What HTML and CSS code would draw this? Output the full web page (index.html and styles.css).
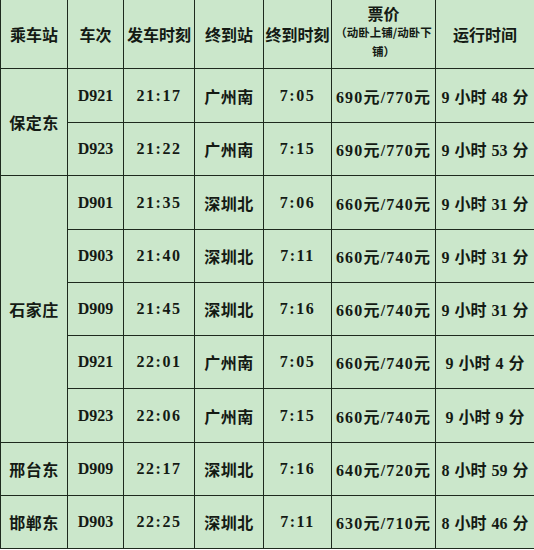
FILE: index.html
```html
<!DOCTYPE html>
<html lang="zh-CN">
<head>
<meta charset="utf-8">
<title>车次时刻表</title>
<link rel="stylesheet" href="styles.css">
</head>
<body>
<table class="schedule">
  <colgroup>
    <col class="c1"><col class="c2"><col class="c3"><col class="c4"><col class="c5"><col class="c6"><col class="c7">
  </colgroup>
  <thead>
    <tr class="head">
      <th class="first">乘车站</th>
      <th>车次</th>
      <th>发车时刻</th>
      <th>终到站</th>
      <th>终到时刻</th>
      <th class="price-h"><span class="ph-main">票价</span><span class="ph-sub">（动卧上铺/动卧下<br>铺）</span></th>
      <th class="last">运行时间</th>
    </tr>
  </thead>
  <tbody>
    <tr class="r54">
      <td class="first station" rowspan="2">保定东</td>
      <td>D921</td><td class="time">21:17</td><td class="cn">广州南</td><td class="time">7:05</td><td class="price">690元/770元</td><td class="last dur">9 小时 48 分</td>
    </tr>
    <tr class="r53">
      <td>D923</td><td class="time">21:22</td><td class="cn">广州南</td><td class="time">7:15</td><td class="price">690元/770元</td><td class="last dur">9 小时 53 分</td>
    </tr>
    <tr class="r54">
      <td class="first station" rowspan="5">石家庄</td>
      <td>D901</td><td class="time">21:35</td><td class="cn">深圳北</td><td class="time">7:06</td><td class="price">660元/740元</td><td class="last dur">9 小时 31 分</td>
    </tr>
    <tr class="r53">
      <td>D903</td><td class="time">21:40</td><td class="cn">深圳北</td><td class="time">7:11</td><td class="price">660元/740元</td><td class="last dur">9 小时 31 分</td>
    </tr>
    <tr class="r53">
      <td>D909</td><td class="time">21:45</td><td class="cn">深圳北</td><td class="time">7:16</td><td class="price">660元/740元</td><td class="last dur">9 小时 31 分</td>
    </tr>
    <tr class="r53">
      <td>D921</td><td class="time">22:01</td><td class="cn">广州南</td><td class="time">7:05</td><td class="price">660元/740元</td><td class="last dur">9 小时 4 分</td>
    </tr>
    <tr class="r54">
      <td>D923</td><td class="time">22:06</td><td class="cn">广州南</td><td class="time">7:15</td><td class="price">660元/740元</td><td class="last dur">9 小时 9 分</td>
    </tr>
    <tr class="r53">
      <td class="first station">邢台东</td>
      <td>D909</td><td class="time">22:17</td><td class="cn">深圳北</td><td class="time">7:16</td><td class="price">640元/720元</td><td class="last dur">8 小时 59 分</td>
    </tr>
    <tr class="r53">
      <td class="first station">邯郸东</td>
      <td>D903</td><td class="time">22:25</td><td class="cn">深圳北</td><td class="time">7:11</td><td class="price">630元/710元</td><td class="last dur">8 小时 46 分</td>
    </tr>
  </tbody>
</table>
</body>
</html>
```

FILE: styles.css
```css
html, body {
  margin: 0;
  padding: 0;
  background: #ffffff;
}

.schedule {
  width: 534px;
  table-layout: fixed;
  border-collapse: separate;
  border-spacing: 0;
  background: #cbe7cb;
  color: #141a14;
  font-family: "Liberation Serif", "Noto Sans CJK SC", serif;
  font-size: 16px;
  font-weight: bold;
}

.c1 { width: 68px; }
.c2 { width: 56px; }
.c3 { width: 71px; }
.c4 { width: 69px; }
.c5 { width: 68px; }
.c6 { width: 104px; }
.c7 { width: 98px; }

.schedule th,
.schedule td {
  box-sizing: border-box;
  padding: 0;
  text-align: center;
  vertical-align: middle;
  white-space: nowrap;
  border-right: 1px solid #1e2a1e;
  border-bottom: 1px solid #1e2a1e;
}

.schedule th.last,
.schedule td.last {
  border-right: none;
}

.schedule .first {
  border-left: 1px solid #1e2a1e;
}

.head {
  height: 69px;
}

.schedule th {
  font-family: "Noto Sans CJK SC", sans-serif;
  font-size: 16px;
  font-weight: bold;
  line-height: 20px;
}

.r54 { height: 54px; }
.r53 { height: 53px; }

.station,
.cn {
  font-family: "Noto Sans CJK SC", sans-serif;
  font-size: 16px;
  letter-spacing: 0.5px;
}

.time {
  letter-spacing: 1.5px;
}

.price {
  letter-spacing: 1.2px;
}

.dur {
  word-spacing: 1px;
}

.price-h {
  white-space: normal;
}

.ph-main {
  display: block;
  font-size: 16px;
  line-height: 19px;
  margin-top: -4px;
}

.ph-sub {
  display: block;
  font-size: 11.5px;
  line-height: 19px;
  letter-spacing: 0;
}
```
